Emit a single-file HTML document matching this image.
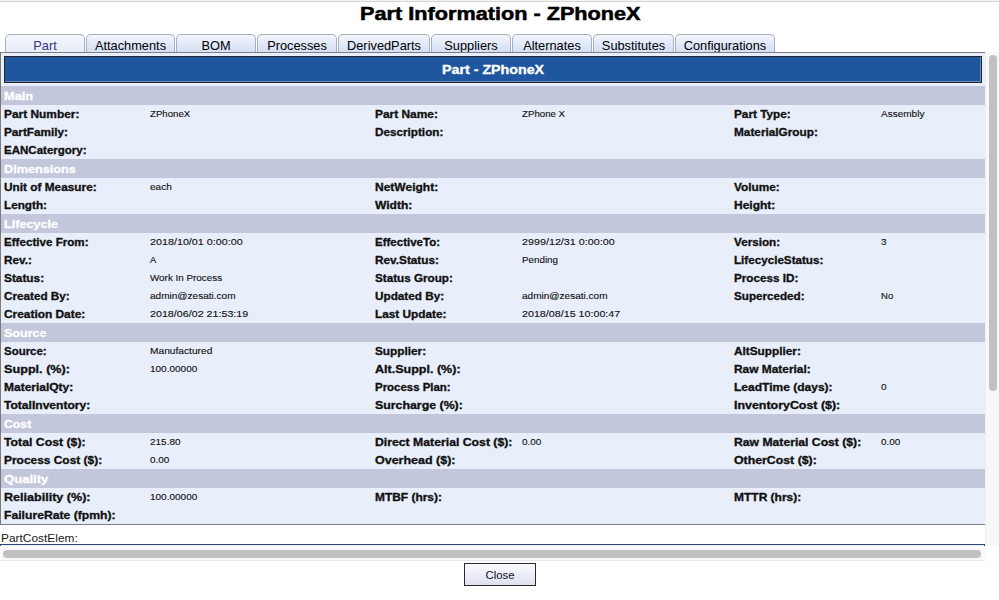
<!DOCTYPE html>
<html><head><meta charset="utf-8">
<style>
html,body{margin:0;padding:0;width:999px;height:600px;overflow:hidden;background:#fff;font-family:"Liberation Sans",sans-serif;}
.t{position:absolute;white-space:nowrap;}
#topline{position:absolute;left:0;top:0;width:999px;height:2px;box-sizing:border-box;background:#f3f3f3;border-bottom:1px solid #d5d5d5;}
.tab{position:absolute;top:34px;height:17px;border:1px solid #a7b0c2;border-bottom:none;border-radius:5px 5px 0 0;background:linear-gradient(#f3f6fc,#d3dff4);font-size:12.8px;line-height:17px;text-align:center;color:#000;box-sizing:content-box;}
.tab span{position:relative;top:2px;}
.tab.act{color:#36367f;background:linear-gradient(#f4f7fc,#e6edf9);}
#panel{position:absolute;left:0;top:52px;width:985px;height:473px;border-top:1px solid #7d7f86;border-bottom:1px solid #7d7f86;border-left:1px solid #7a7a7a;box-sizing:border-box;background:#e8eefa;}
#hdr{position:absolute;left:4px;top:56px;width:978px;height:27px;box-sizing:border-box;border:1px solid #22252c;background:#1f56a0;box-shadow:inset -1px -1px 0 #6f89b6;}
.sec{position:absolute;left:1px;width:984px;height:19px;background:#c2c7dc;}
#bline{position:absolute;left:0;top:544px;width:985px;height:2px;box-sizing:border-box;border-top:1px solid #2c4670;border-right:1px solid #2c4670;border-left:1px solid #2c4670;background:#eaf1fa;}
#hsb{position:absolute;left:3px;top:550px;width:978px;height:8px;border-radius:4px;background:#c1c1c1;}
#htrack{position:absolute;left:0;top:546px;width:985px;height:15px;background:#fafafa;border-bottom:1px solid #eaeaea;box-sizing:border-box;}
#vtrack{position:absolute;left:985px;top:52px;width:14px;height:494px;background:#f8f8f8;border-left:1px solid #efefef;box-sizing:border-box;}
#vsb{position:absolute;left:989px;top:55px;width:8px;height:336px;border-radius:4px;background:#c1c1c1;}
#close{position:absolute;left:464px;top:563px;width:72px;height:23px;box-sizing:border-box;border:1px solid #2a2a2e;background:linear-gradient(#fbfbfe,#dfe0f0);}

</style></head><body>
<div id="topline"></div>
<div class="tab act" style="left:5px;width:78px"><span>Part</span></div>
<div class="tab" style="left:86px;width:87px"><span>Attachments</span></div>
<div class="tab" style="left:176px;width:78px"><span>BOM</span></div>
<div class="tab" style="left:257px;width:78px"><span>Processes</span></div>
<div class="tab" style="left:338px;width:90px"><span>DerivedParts</span></div>
<div class="tab" style="left:431px;width:78px"><span>Suppliers</span></div>
<div class="tab" style="left:512px;width:78px"><span>Alternates</span></div>
<div class="tab" style="left:593px;width:79px"><span>Substitutes</span></div>
<div class="tab" style="left:675px;width:98px"><span>Configurations</span></div>
<div id="vtrack"></div>
<div id="vsb"></div>
<div id="panel"></div>
<div id="hdr"></div>
<div class="sec" style="top:86px"></div>
<div class="sec" style="top:159px"></div>
<div class="sec" style="top:214px"></div>
<div class="sec" style="top:323px"></div>
<div class="sec" style="top:414px"></div>
<div class="sec" style="top:469px"></div>
<div id="htrack"></div>
<div id="bline"></div>
<div id="hsb"></div>
<div id="close"></div>
<div class="t" style="left:381.68px;top:4.51px;font-size:18.3px;line-height:18.3px;font-weight:bold;color:#000;transform:scaleX(1.1852);transform-origin:118.32px 0;-webkit-text-stroke:0.5px #000">Part Information - ZPhoneX</div>
<div class="t" style="left:448.93px;top:63.79px;font-size:12.3px;line-height:12.3px;font-weight:bold;color:#fff;transform:scaleX(1.1579);transform-origin:44.07px 0;-webkit-text-stroke:0.3px #fff">Part - ZPhoneX</div>
<div class="t" style="left:4.30px;top:90.93px;font-size:11.3px;line-height:11.3px;font-weight:bold;color:#fff;transform:scaleX(1.1318);transform-origin:0 0;-webkit-text-stroke:0.3px #fff">Main</div>
<div class="t" style="left:4.40px;top:110.06px;font-size:10.15px;line-height:10.15px;font-weight:bold;color:#111;transform:scaleX(1.1752);transform-origin:0 0;-webkit-text-stroke:0.3px #111">Part Number:</div>
<div class="t" style="left:150.20px;top:108.67px;font-size:9.6px;line-height:9.6px;font-weight:normal;color:#111;transform:scaleX(1.0052);transform-origin:0 0;-webkit-text-stroke:0.12px #111">ZPhoneX</div>
<div class="t" style="left:375.00px;top:110.06px;font-size:10.15px;line-height:10.15px;font-weight:bold;color:#111;transform:scaleX(1.1755);transform-origin:0 0;-webkit-text-stroke:0.3px #111">Part Name:</div>
<div class="t" style="left:521.70px;top:108.67px;font-size:9.6px;line-height:9.6px;font-weight:normal;color:#111;transform:scaleX(1.0095);transform-origin:0 0;-webkit-text-stroke:0.12px #111">ZPhone X</div>
<div class="t" style="left:734.30px;top:110.06px;font-size:10.15px;line-height:10.15px;font-weight:bold;color:#111;transform:scaleX(1.1625);transform-origin:0 0;-webkit-text-stroke:0.3px #111">Part Type:</div>
<div class="t" style="left:880.70px;top:108.67px;font-size:9.6px;line-height:9.6px;font-weight:normal;color:#111;transform:scaleX(1.0432);transform-origin:0 0;-webkit-text-stroke:0.12px #111">Assembly</div>
<div class="t" style="left:4.40px;top:128.06px;font-size:10.15px;line-height:10.15px;font-weight:bold;color:#111;transform:scaleX(1.1600);transform-origin:0 0;-webkit-text-stroke:0.3px #111">PartFamily:</div>
<div class="t" style="left:375.00px;top:128.06px;font-size:10.15px;line-height:10.15px;font-weight:bold;color:#111;transform:scaleX(1.1569);transform-origin:0 0;-webkit-text-stroke:0.3px #111">Description:</div>
<div class="t" style="left:734.30px;top:128.06px;font-size:10.15px;line-height:10.15px;font-weight:bold;color:#111;transform:scaleX(1.1652);transform-origin:0 0;-webkit-text-stroke:0.3px #111">MaterialGroup:</div>
<div class="t" style="left:4.40px;top:146.06px;font-size:10.15px;line-height:10.15px;font-weight:bold;color:#111;transform:scaleX(1.1380);transform-origin:0 0;-webkit-text-stroke:0.3px #111">EANCatergory:</div>
<div class="t" style="left:4.30px;top:163.93px;font-size:11.3px;line-height:11.3px;font-weight:bold;color:#fff;transform:scaleX(1.1206);transform-origin:0 0;-webkit-text-stroke:0.3px #fff">Dimensions</div>
<div class="t" style="left:4.40px;top:183.06px;font-size:10.15px;line-height:10.15px;font-weight:bold;color:#111;transform:scaleX(1.1680);transform-origin:0 0;-webkit-text-stroke:0.3px #111">Unit of Measure:</div>
<div class="t" style="left:150.20px;top:181.67px;font-size:9.6px;line-height:9.6px;font-weight:normal;color:#111;transform:scaleX(1.0433);transform-origin:0 0;-webkit-text-stroke:0.12px #111">each</div>
<div class="t" style="left:375.00px;top:183.06px;font-size:10.15px;line-height:10.15px;font-weight:bold;color:#111;transform:scaleX(1.1868);transform-origin:0 0;-webkit-text-stroke:0.3px #111">NetWeight:</div>
<div class="t" style="left:734.30px;top:183.06px;font-size:10.15px;line-height:10.15px;font-weight:bold;color:#111;transform:scaleX(1.1654);transform-origin:0 0;-webkit-text-stroke:0.3px #111">Volume:</div>
<div class="t" style="left:4.40px;top:201.06px;font-size:10.15px;line-height:10.15px;font-weight:bold;color:#111;transform:scaleX(1.1583);transform-origin:0 0;-webkit-text-stroke:0.3px #111">Length:</div>
<div class="t" style="left:375.00px;top:201.06px;font-size:10.15px;line-height:10.15px;font-weight:bold;color:#111;transform:scaleX(1.1886);transform-origin:0 0;-webkit-text-stroke:0.3px #111">Width:</div>
<div class="t" style="left:734.30px;top:201.06px;font-size:10.15px;line-height:10.15px;font-weight:bold;color:#111;transform:scaleX(1.1843);transform-origin:0 0;-webkit-text-stroke:0.3px #111">Height:</div>
<div class="t" style="left:4.30px;top:218.93px;font-size:11.3px;line-height:11.3px;font-weight:bold;color:#fff;transform:scaleX(1.1201);transform-origin:0 0;-webkit-text-stroke:0.3px #fff">Lifecycle</div>
<div class="t" style="left:4.40px;top:238.06px;font-size:10.15px;line-height:10.15px;font-weight:bold;color:#111;transform:scaleX(1.1474);transform-origin:0 0;-webkit-text-stroke:0.3px #111">Effective From:</div>
<div class="t" style="left:150.20px;top:236.67px;font-size:9.6px;line-height:9.6px;font-weight:normal;color:#111;transform:scaleX(1.1208);transform-origin:0 0;-webkit-text-stroke:0.12px #111">2018/10/01 0:00:00</div>
<div class="t" style="left:375.00px;top:238.06px;font-size:10.15px;line-height:10.15px;font-weight:bold;color:#111;transform:scaleX(1.1370);transform-origin:0 0;-webkit-text-stroke:0.3px #111">EffectiveTo:</div>
<div class="t" style="left:521.70px;top:236.67px;font-size:9.6px;line-height:9.6px;font-weight:normal;color:#111;transform:scaleX(1.1208);transform-origin:0 0;-webkit-text-stroke:0.12px #111">2999/12/31 0:00:00</div>
<div class="t" style="left:734.30px;top:238.06px;font-size:10.15px;line-height:10.15px;font-weight:bold;color:#111;transform:scaleX(1.1548);transform-origin:0 0;-webkit-text-stroke:0.3px #111">Version:</div>
<div class="t" style="left:880.70px;top:236.67px;font-size:9.6px;line-height:9.6px;font-weight:normal;color:#111;transform:scaleX(1.0451);transform-origin:0 0;-webkit-text-stroke:0.12px #111">3</div>
<div class="t" style="left:4.40px;top:256.06px;font-size:10.15px;line-height:10.15px;font-weight:bold;color:#111;transform:scaleX(1.1598);transform-origin:0 0;-webkit-text-stroke:0.3px #111">Rev.:</div>
<div class="t" style="left:150.20px;top:254.67px;font-size:9.6px;line-height:9.6px;font-weight:normal;color:#111;transform:scaleX(0.9621);transform-origin:0 0;-webkit-text-stroke:0.12px #111">A</div>
<div class="t" style="left:375.00px;top:256.06px;font-size:10.15px;line-height:10.15px;font-weight:bold;color:#111;transform:scaleX(1.1639);transform-origin:0 0;-webkit-text-stroke:0.3px #111">Rev.Status:</div>
<div class="t" style="left:521.70px;top:254.67px;font-size:9.6px;line-height:9.6px;font-weight:normal;color:#111;transform:scaleX(1.0219);transform-origin:0 0;-webkit-text-stroke:0.12px #111">Pending</div>
<div class="t" style="left:734.30px;top:256.06px;font-size:10.15px;line-height:10.15px;font-weight:bold;color:#111;transform:scaleX(1.1506);transform-origin:0 0;-webkit-text-stroke:0.3px #111">LifecycleStatus:</div>
<div class="t" style="left:4.40px;top:274.06px;font-size:10.15px;line-height:10.15px;font-weight:bold;color:#111;transform:scaleX(1.1689);transform-origin:0 0;-webkit-text-stroke:0.3px #111">Status:</div>
<div class="t" style="left:150.20px;top:272.67px;font-size:9.6px;line-height:9.6px;font-weight:normal;color:#111;transform:scaleX(1.0273);transform-origin:0 0;-webkit-text-stroke:0.12px #111">Work In Process</div>
<div class="t" style="left:375.00px;top:274.06px;font-size:10.15px;line-height:10.15px;font-weight:bold;color:#111;transform:scaleX(1.1538);transform-origin:0 0;-webkit-text-stroke:0.3px #111">Status Group:</div>
<div class="t" style="left:734.30px;top:274.06px;font-size:10.15px;line-height:10.15px;font-weight:bold;color:#111;transform:scaleX(1.1543);transform-origin:0 0;-webkit-text-stroke:0.3px #111">Process ID:</div>
<div class="t" style="left:4.40px;top:292.06px;font-size:10.15px;line-height:10.15px;font-weight:bold;color:#111;transform:scaleX(1.1542);transform-origin:0 0;-webkit-text-stroke:0.3px #111">Created By:</div>
<div class="t" style="left:150.20px;top:290.67px;font-size:9.6px;line-height:9.6px;font-weight:normal;color:#111;transform:scaleX(1.0472);transform-origin:0 0;-webkit-text-stroke:0.12px #111">admin@zesati.com</div>
<div class="t" style="left:375.00px;top:292.06px;font-size:10.15px;line-height:10.15px;font-weight:bold;color:#111;transform:scaleX(1.1591);transform-origin:0 0;-webkit-text-stroke:0.3px #111">Updated By:</div>
<div class="t" style="left:521.70px;top:290.67px;font-size:9.6px;line-height:9.6px;font-weight:normal;color:#111;transform:scaleX(1.0472);transform-origin:0 0;-webkit-text-stroke:0.12px #111">admin@zesati.com</div>
<div class="t" style="left:734.30px;top:292.06px;font-size:10.15px;line-height:10.15px;font-weight:bold;color:#111;transform:scaleX(1.1509);transform-origin:0 0;-webkit-text-stroke:0.3px #111">Superceded:</div>
<div class="t" style="left:880.70px;top:290.67px;font-size:9.6px;line-height:9.6px;font-weight:normal;color:#111;transform:scaleX(0.9980);transform-origin:0 0;-webkit-text-stroke:0.12px #111">No</div>
<div class="t" style="left:4.40px;top:310.06px;font-size:10.15px;line-height:10.15px;font-weight:bold;color:#111;transform:scaleX(1.1744);transform-origin:0 0;-webkit-text-stroke:0.3px #111">Creation Date:</div>
<div class="t" style="left:150.20px;top:308.67px;font-size:9.6px;line-height:9.6px;font-weight:normal;color:#111;transform:scaleX(1.1162);transform-origin:0 0;-webkit-text-stroke:0.12px #111">2018/06/02 21:53:19</div>
<div class="t" style="left:375.00px;top:310.06px;font-size:10.15px;line-height:10.15px;font-weight:bold;color:#111;transform:scaleX(1.1644);transform-origin:0 0;-webkit-text-stroke:0.3px #111">Last Update:</div>
<div class="t" style="left:521.70px;top:308.67px;font-size:9.6px;line-height:9.6px;font-weight:normal;color:#111;transform:scaleX(1.1162);transform-origin:0 0;-webkit-text-stroke:0.12px #111">2018/08/15 10:00:47</div>
<div class="t" style="left:4.30px;top:327.93px;font-size:11.3px;line-height:11.3px;font-weight:bold;color:#fff;transform:scaleX(1.1113);transform-origin:0 0;-webkit-text-stroke:0.3px #fff">Source</div>
<div class="t" style="left:4.40px;top:347.06px;font-size:10.15px;line-height:10.15px;font-weight:bold;color:#111;transform:scaleX(1.1325);transform-origin:0 0;-webkit-text-stroke:0.3px #111">Source:</div>
<div class="t" style="left:150.20px;top:345.67px;font-size:9.6px;line-height:9.6px;font-weight:normal;color:#111;transform:scaleX(1.0621);transform-origin:0 0;-webkit-text-stroke:0.12px #111">Manufactured</div>
<div class="t" style="left:375.00px;top:347.06px;font-size:10.15px;line-height:10.15px;font-weight:bold;color:#111;transform:scaleX(1.1639);transform-origin:0 0;-webkit-text-stroke:0.3px #111">Supplier:</div>
<div class="t" style="left:734.30px;top:347.06px;font-size:10.15px;line-height:10.15px;font-weight:bold;color:#111;transform:scaleX(1.1645);transform-origin:0 0;-webkit-text-stroke:0.3px #111">AltSupplier:</div>
<div class="t" style="left:4.40px;top:365.06px;font-size:10.15px;line-height:10.15px;font-weight:bold;color:#111;transform:scaleX(1.2486);transform-origin:0 0;-webkit-text-stroke:0.3px #111">Suppl. (%):</div>
<div class="t" style="left:150.20px;top:363.67px;font-size:9.6px;line-height:9.6px;font-weight:normal;color:#111;transform:scaleX(1.0423);transform-origin:0 0;-webkit-text-stroke:0.12px #111">100.00000</div>
<div class="t" style="left:375.00px;top:365.06px;font-size:10.15px;line-height:10.15px;font-weight:bold;color:#111;transform:scaleX(1.2367);transform-origin:0 0;-webkit-text-stroke:0.3px #111">Alt.Suppl. (%):</div>
<div class="t" style="left:734.30px;top:365.06px;font-size:10.15px;line-height:10.15px;font-weight:bold;color:#111;transform:scaleX(1.1754);transform-origin:0 0;-webkit-text-stroke:0.3px #111">Raw Material:</div>
<div class="t" style="left:4.40px;top:383.06px;font-size:10.15px;line-height:10.15px;font-weight:bold;color:#111;transform:scaleX(1.1829);transform-origin:0 0;-webkit-text-stroke:0.3px #111">MaterialQty:</div>
<div class="t" style="left:375.00px;top:383.06px;font-size:10.15px;line-height:10.15px;font-weight:bold;color:#111;transform:scaleX(1.1295);transform-origin:0 0;-webkit-text-stroke:0.3px #111">Process Plan:</div>
<div class="t" style="left:734.30px;top:383.06px;font-size:10.15px;line-height:10.15px;font-weight:bold;color:#111;transform:scaleX(1.1865);transform-origin:0 0;-webkit-text-stroke:0.3px #111">LeadTime (days):</div>
<div class="t" style="left:880.70px;top:381.67px;font-size:9.6px;line-height:9.6px;font-weight:normal;color:#111;transform:scaleX(1.0451);transform-origin:0 0;-webkit-text-stroke:0.12px #111">0</div>
<div class="t" style="left:4.40px;top:401.06px;font-size:10.15px;line-height:10.15px;font-weight:bold;color:#111;transform:scaleX(1.1919);transform-origin:0 0;-webkit-text-stroke:0.3px #111">TotalInventory:</div>
<div class="t" style="left:375.00px;top:401.06px;font-size:10.15px;line-height:10.15px;font-weight:bold;color:#111;transform:scaleX(1.2199);transform-origin:0 0;-webkit-text-stroke:0.3px #111">Surcharge (%):</div>
<div class="t" style="left:734.30px;top:401.06px;font-size:10.15px;line-height:10.15px;font-weight:bold;color:#111;transform:scaleX(1.2264);transform-origin:0 0;-webkit-text-stroke:0.3px #111">InventoryCost ($):</div>
<div class="t" style="left:4.30px;top:418.93px;font-size:11.3px;line-height:11.3px;font-weight:bold;color:#fff;transform:scaleX(1.0841);transform-origin:0 0;-webkit-text-stroke:0.3px #fff">Cost</div>
<div class="t" style="left:4.40px;top:438.06px;font-size:10.15px;line-height:10.15px;font-weight:bold;color:#111;transform:scaleX(1.2117);transform-origin:0 0;-webkit-text-stroke:0.3px #111">Total Cost ($):</div>
<div class="t" style="left:150.20px;top:436.67px;font-size:9.6px;line-height:9.6px;font-weight:normal;color:#111;transform:scaleX(1.0408);transform-origin:0 0;-webkit-text-stroke:0.12px #111">215.80</div>
<div class="t" style="left:375.00px;top:438.06px;font-size:10.15px;line-height:10.15px;font-weight:bold;color:#111;transform:scaleX(1.2091);transform-origin:0 0;-webkit-text-stroke:0.3px #111">Direct Material Cost ($):</div>
<div class="t" style="left:521.70px;top:436.67px;font-size:9.6px;line-height:9.6px;font-weight:normal;color:#111;transform:scaleX(1.0384);transform-origin:0 0;-webkit-text-stroke:0.12px #111">0.00</div>
<div class="t" style="left:734.30px;top:438.06px;font-size:10.15px;line-height:10.15px;font-weight:bold;color:#111;transform:scaleX(1.2028);transform-origin:0 0;-webkit-text-stroke:0.3px #111">Raw Material Cost ($):</div>
<div class="t" style="left:880.70px;top:436.67px;font-size:9.6px;line-height:9.6px;font-weight:normal;color:#111;transform:scaleX(1.0384);transform-origin:0 0;-webkit-text-stroke:0.12px #111">0.00</div>
<div class="t" style="left:4.40px;top:456.06px;font-size:10.15px;line-height:10.15px;font-weight:bold;color:#111;transform:scaleX(1.1781);transform-origin:0 0;-webkit-text-stroke:0.3px #111">Process Cost ($):</div>
<div class="t" style="left:150.20px;top:454.67px;font-size:9.6px;line-height:9.6px;font-weight:normal;color:#111;transform:scaleX(1.0384);transform-origin:0 0;-webkit-text-stroke:0.12px #111">0.00</div>
<div class="t" style="left:375.00px;top:456.06px;font-size:10.15px;line-height:10.15px;font-weight:bold;color:#111;transform:scaleX(1.2329);transform-origin:0 0;-webkit-text-stroke:0.3px #111">Overhead ($):</div>
<div class="t" style="left:734.30px;top:456.06px;font-size:10.15px;line-height:10.15px;font-weight:bold;color:#111;transform:scaleX(1.2165);transform-origin:0 0;-webkit-text-stroke:0.3px #111">OtherCost ($):</div>
<div class="t" style="left:4.30px;top:473.93px;font-size:11.3px;line-height:11.3px;font-weight:bold;color:#fff;transform:scaleX(1.1563);transform-origin:0 0;-webkit-text-stroke:0.3px #fff">Quality</div>
<div class="t" style="left:4.40px;top:493.06px;font-size:10.15px;line-height:10.15px;font-weight:bold;color:#111;transform:scaleX(1.2408);transform-origin:0 0;-webkit-text-stroke:0.3px #111">Reliability (%):</div>
<div class="t" style="left:150.20px;top:491.67px;font-size:9.6px;line-height:9.6px;font-weight:normal;color:#111;transform:scaleX(1.0423);transform-origin:0 0;-webkit-text-stroke:0.12px #111">100.00000</div>
<div class="t" style="left:375.00px;top:493.06px;font-size:10.15px;line-height:10.15px;font-weight:bold;color:#111;transform:scaleX(1.1787);transform-origin:0 0;-webkit-text-stroke:0.3px #111">MTBF (hrs):</div>
<div class="t" style="left:734.30px;top:493.06px;font-size:10.15px;line-height:10.15px;font-weight:bold;color:#111;transform:scaleX(1.1839);transform-origin:0 0;-webkit-text-stroke:0.3px #111">MTTR (hrs):</div>
<div class="t" style="left:4.40px;top:511.06px;font-size:10.15px;line-height:10.15px;font-weight:bold;color:#111;transform:scaleX(1.2017);transform-origin:0 0;-webkit-text-stroke:0.3px #111">FailureRate (fpmh):</div>
<div class="t" style="left:0.70px;top:532.66px;font-size:10.8px;line-height:10.8px;font-weight:normal;color:#1a1a1a;transform:scaleX(1.1035);transform-origin:0 0">PartCostElem:</div>
<div class="t" style="left:485.94px;top:569.59px;font-size:11px;line-height:11px;font-weight:normal;color:#0e0e2a;transform:scaleX(1.0312);transform-origin:14.06px 0">Close</div>
</body></html>
